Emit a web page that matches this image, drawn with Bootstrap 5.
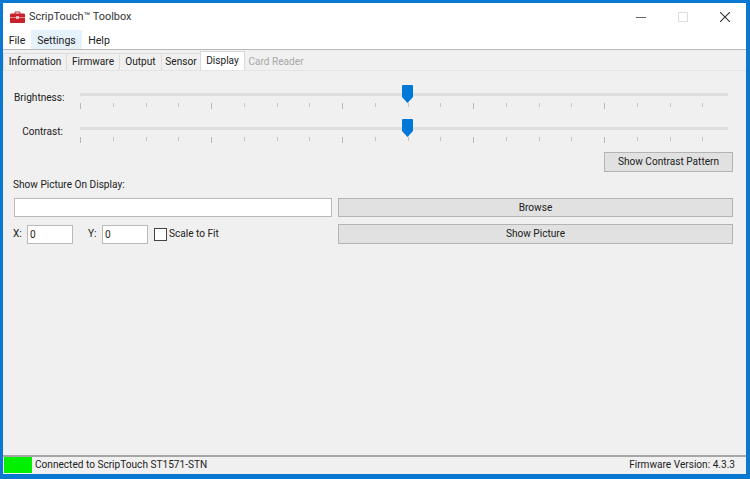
<!DOCTYPE html>
<html lang="en">
<head>
<meta charset="utf-8">
<title>ScripTouch Toolbox</title>
<link href="https://cdn.jsdelivr.net/npm/bootstrap@5.3.0/dist/css/bootstrap.min.css" rel="stylesheet">
<style>
html,body{height:479px;overflow:hidden}
body{background:#0a78d0;padding:3px 4px 5px 3px;font-family:Roboto,"Noto Sans",sans-serif;font-size:10.1px;color:#222;line-height:14px}
.win{height:471px;background:#f0f0f0;display:flex;flex-direction:column}
.titlebar{height:27px;background:#fff;padding-left:7px;font-size:10.9px;color:#333}
.titlebar svg{margin-right:4px}
.wbtns{margin-left:auto}
.wbtn{width:42px;height:27px;display:flex;align-items:center;justify-content:center;padding-left:4px}
.menubar{background:#fff;border-bottom:1px solid #b9b9b9;box-sizing:content-box;height:19px;font-size:10.6px}
.menuitem{height:19px;line-height:21px;color:#222;text-align:center}
.mfile{width:28px}
.mset{width:51px}
.mhelp{width:34px}
.menuitem.hot{background:#e5f1fb}
.tabstrip{margin:3px 0 0 1px;border:0;height:17px;flex-wrap:nowrap;align-items:flex-end}
.tabstrip .nav-link{font-size:10.1px;line-height:15px;height:17px;padding:0;color:#222;background:#f0f0f0;border:1px solid #dcdcdc;border-bottom:0;border-radius:0;margin:0;margin-left:-1px;text-align:center;white-space:nowrap}
.tabstrip .nav-link.active{height:19px;background:#fff;color:#222;border-color:#d9d9d9;line-height:17px;z-index:1;position:relative}
.tabstrip .nav-link.disabled{color:#a8a8a8;background:#f0f0f0}
.panel{height:385px;margin-left:1px;background:#f0f0f0;border-top:1px solid #e4e4e4;padding:0 13px 0 10px}
.slrow{height:34px}
.sllabel{width:49px;text-align:right;margin-right:17px;line-height:14px;padding-top:12px}
.slider{width:648px;position:relative;height:34px}
.track{position:absolute;left:0;right:0;top:14px;height:3px;background:#dedede}
.ticks{position:absolute;left:0;top:24px;display:flex;gap:31.75px;align-items:flex-start}
.tk{width:1px;height:4px;background:#c4c4c4;flex:none}
.tk.maj{height:6px;background:#b8b8b8}
.thumb{position:absolute;left:322px;top:6px}
.winbtn{border:1px solid #b4b4b4;border-radius:0;background:#e1e1e1;color:#222;font-size:10.1px;padding:0;line-height:16px;display:block}
.winbtn:hover{background:#e1e1e1;color:#222;border-color:#b4b4b4}
.pat{width:129px;height:20px;margin-left:auto}
.picrow{gap:6px}
.piclabel{margin:6px 0 0 -1px;height:20px}
.field{border:1px solid #b9b9b9;border-radius:0;background:#fff;font-size:10.1px;color:#222;padding:0 2px;min-height:0;height:19px;line-height:15px;font-family:inherit}
.pathf{width:318px;flex:none}
.actbtn{flex:1;width:auto}
.numf{width:46px;flex:none}
.lblx{width:14px;margin-left:-1px}
.lbly{width:14px;margin-left:15px}
.boxchk{width:13px;height:13px;margin:0 2px 0 6px;border:1px solid #444;border-radius:0;background:#fff;flex:none}
.statusbar{height:18px;border-top:2px solid #a6a6a6;background:#f0f0f0;padding:0 11px 0 1px;flex:none}
.led{width:28px;height:16px;background:#00f000;margin-right:3px}
</style>
</head>
<body>
<div class="win">
  <div class="titlebar d-flex align-items-center">
    <svg width="15" height="12" viewBox="0 0 15 12"><path d="M5 3V1h5v2" fill="none" stroke="#a33" stroke-width="1"/><rect x="0" y="2.500" width="15" height="9.500" rx="1" fill="#c8202c"/><rect x="0" y="6" width="15" height="1" fill="#f08a8a"/><rect x="6" y="5" width="3" height="3" fill="#e8c0c0"/></svg>
    <span>ScripTouch™ Toolbox</span>
    <div class="wbtns d-flex">
      <div class="wbtn"><svg width="10" height="10"><rect x="0" y="5" width="10" height="1" fill="#666"/></svg></div>
      <div class="wbtn"><svg width="10" height="10"><rect x=".5" y=".5" width="9" height="9" fill="none" stroke="#ddd"/></svg></div>
      <div class="wbtn"><svg width="10" height="10"><path d="M0 0L10 10M10 0L0 10" stroke="#333" stroke-width="1.100"/></svg></div>
    </div>
  </div>
  <div class="menubar d-flex">
    <div class="menuitem mfile">File</div>
    <div class="menuitem mset hot">Settings</div>
    <div class="menuitem mhelp">Help</div>
  </div>
  <ul class="nav nav-tabs tabstrip">
    <li class="nav-item"><a class="nav-link" style="width:64px">Information</a></li>
    <li class="nav-item"><a class="nav-link" style="width:54px">Firmware</a></li>
    <li class="nav-item"><a class="nav-link" style="width:43px">Output</a></li>
    <li class="nav-item"><a class="nav-link" style="width:40px">Sensor</a></li>
    <li class="nav-item"><a class="nav-link active" style="width:45px">Display</a></li>
    <li class="nav-item"><a class="nav-link disabled" style="width:64px">Card Reader</a></li>
  </ul>
  <div class="panel">
    <div class="slrow d-flex" style="margin-top:8px">
      <div class="sllabel">Brightness:</div>
      <div class="slider">
        <div class="track"></div>
        <div class="ticks" id="t1"></div>
        <svg class="thumb" width="11" height="18" viewBox="0 0 11 18"><path d="M0 1Q0 0 1 0H10Q11 0 11 1V12L5.500 18L0 12Z" fill="#0078d7"/></svg>
      </div>
    </div>
    <div class="slrow d-flex">
      <div class="sllabel">Contrast:</div>
      <div class="slider">
        <div class="track"></div>
        <div class="ticks" id="t2"></div>
        <svg class="thumb" width="11" height="18" viewBox="0 0 11 18"><path d="M0 1Q0 0 1 0H10Q11 0 11 1V12L5.500 18L0 12Z" fill="#0078d7"/></svg>
      </div>
    </div>
    <div class="d-flex" style="margin-top:5px"><button class="btn winbtn pat">Show Contrast Pattern</button></div>
    <div class="piclabel">Show Picture On Display:</div>
    <div class="d-flex picrow">
      <input class="form-control field pathf" value="">
      <button class="btn winbtn actbtn" style="height:19px">Browse</button>
    </div>
    <div class="d-flex align-items-center picrow" style="margin-top:7px;gap:0">
      <span class="lblx">X:</span><input class="form-control field numf" value="0">
      <span class="lbly">Y:</span><input class="form-control field numf" value="0">
      <span class="boxchk"></span><span>Scale to Fit</span>
      <button class="btn winbtn" style="height:20px;width:395px;margin-left:auto">Show Picture</button>
    </div>
  </div>
  <div class="statusbar d-flex align-items-center">
    <div class="led"></div><span>Connected to ScripTouch ST1571-STN</span><span class="ms-auto">Firmware Version: 4.3.3</span>
  </div>
</div>
<script>
for (const id of ['t1','t2']) {
  const el = document.getElementById(id);
  for (let i = 0; i < 20; i++) {
    const d = document.createElement('div');
    d.className = 'tk' + (i % 4 === 0 ? ' maj' : '');
    el.appendChild(d);
  }
}
</script>
<script src="https://cdn.jsdelivr.net/npm/bootstrap@5.3.0/dist/js/bootstrap.bundle.min.js"></script>
</body>
</html>
